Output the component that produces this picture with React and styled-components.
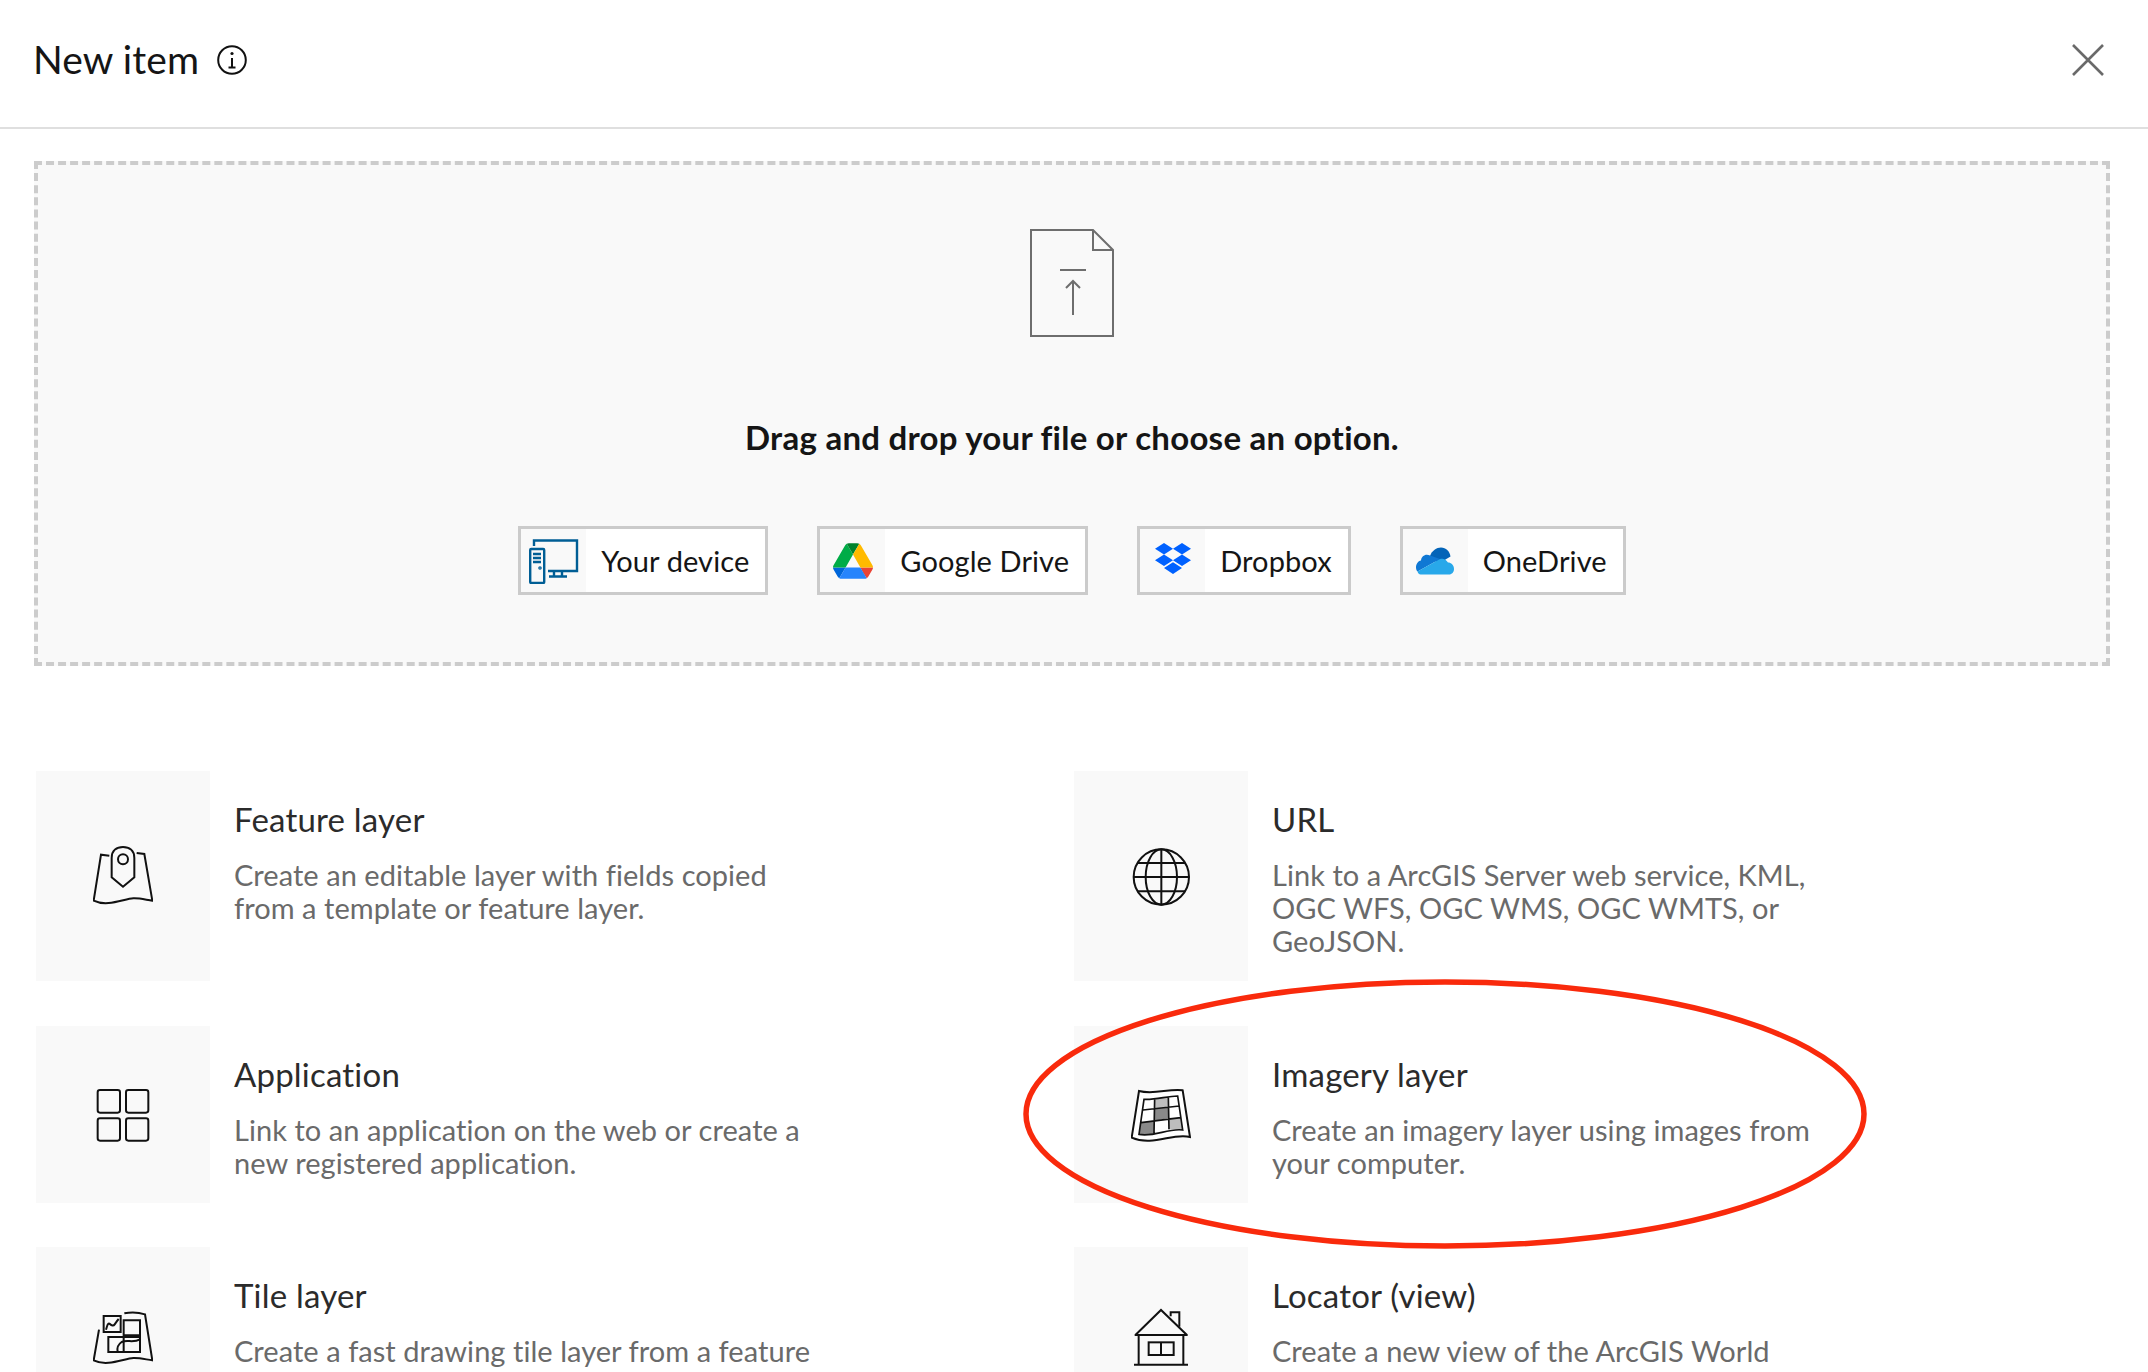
import React from "react";
import styled, { createGlobalStyle } from "styled-components";

const Global = createGlobalStyle`
  html, body { margin: 0; padding: 0; background: #fff; }
  body { width: 2148px; height: 1372px; overflow: hidden; font-family: Lato, "Noto Sans", sans-serif; }
`;

const Page = styled.div`
  position: relative;
  width: 2148px;
  height: 1372px;
  overflow: hidden;
  color: #151515;
`;
const Header = styled.header`
  box-sizing: border-box;
  height: 129px;
  padding: 0 33px 8px;
  display: flex;
  align-items: center;
  gap: 18px;
  border-bottom: 2px solid #dfdfdf;
`;
const Title = styled.h1`
  margin: 0;
  font-size: 39px;
  font-weight: 400;
  letter-spacing: 0.1px;
  line-height: 1;
`;
const CloseBtn = styled.button`
  margin-left: auto;
  margin-right: 11px;
  padding: 0;
  width: 32px;
  height: 32px;
  border: 0;
  background: none;
  display: flex;
`;
const Drop = styled.section`
  box-sizing: border-box;
  margin: 32px 38px 0 34px;
  height: 505px;
  border: 4px dashed #cccccc;
  background: #f9f9f9;
  display: flex;
  flex-direction: column;
  align-items: center;
  padding-top: 64px;
`;
const Prompt = styled.p`
  margin: 78px 0 0;
  font-size: 33px;
  font-weight: 700;
  line-height: 44px;
  letter-spacing: 0.25px;
  color: #151515;
`;
const Sources = styled.div`
  margin-top: 67px;
  display: flex;
  gap: 49px;
`;
const Source = styled.button`
  box-sizing: border-box;
  height: 69px;
  padding: 0 16px 1px 0;
  display: flex;
  align-items: center;
  border: 3px solid #cbcbcb;
  background: #fff;
  font: 400 29px Lato, sans-serif;
  letter-spacing: 0.1px;
  color: #151515;
`;
const SourceIcon = styled.span`
  width: 65px;
  align-self: stretch;
  margin: 0 15px -1px 0;
  background: #f9f9f9;
  display: flex;
  align-items: center;
  justify-content: center;
`;
const Grid = styled.div`
  margin: 105px 0 0 36px;
  display: grid;
  grid-template-columns: 1038px 1038px;
  row-gap: 44.5px;
`;
const Card = styled.article`
  display: flex;
  align-items: stretch;
  min-height: 177px;
`;
const Tile = styled.div`
  flex: none;
  width: 174px;
  background: #f9f9f9;
  display: flex;
  align-items: center;
  justify-content: center;
`;
const Body = styled.div`
  padding: 28px 0 24px 24px;
`;
const CardTitle = styled.h2`
  margin: 0 0 19px;
  font-size: 33px;
  font-weight: 400;
  line-height: 40px;
  letter-spacing: 0.2px;
  color: #2b2b2b;
`;
const CardText = styled.p`
  margin: 0;
  max-width: 585px;
  font-size: 29px;
  line-height: 33px;
  letter-spacing: 0.05px;
  color: #6a6a6a;
`;
const Mark = styled.svg`
  position: absolute;
  left: 1020px;
  top: 976px;
  pointer-events: none;
`;

const line = { fill: "none", stroke: "#111", strokeWidth: 6, strokeLinejoin: "miter" };

const Info = () => (
  <svg width="30" height="30" viewBox="0 0 30 30" fill="none" stroke="#111" strokeWidth="2">
    <circle cx="15" cy="15" r="13.8" />
    <path d="M15 13v9M11.5 22.5h7" />
    <circle cx="15" cy="8.5" r="1.6" fill="#111" stroke="none" />
  </svg>
);
const Close = () => (
  <svg width="32" height="32" viewBox="0 0 32 32" stroke="#6a6a6a" strokeWidth="2.6">
    <path d="M1 1l30 30M31 1L1 31" />
  </svg>
);
const FileUp = () => (
  <svg width="84" height="108" viewBox="0 0 84 108" fill="none" stroke="#6e6e6e" strokeWidth="2">
    <path d="M1 1h62l20 20v86H1z" />
    <path d="M63 1v20h20" />
    <path d="M30 41h26M43 86V52M36 59l7-7 7 7" />
  </svg>
);
const Device = () => (
  <svg width="50" height="46" viewBox="0 0 50 46" fill="none" stroke="#005e95" strokeWidth="2.4">
    <path d="M5 8V2.500h43V33H19" />
    <rect x="1.200" y="11" width="14" height="34" rx="1" />
    <path d="M4 16h8M4 20h8M4 24h8" />
    <path d="M25 33v5M33 33v5M20 38.500h18" />
    <circle cx="11" cy="30" r="0.6" fill="#005e95" />
  </svg>
);
const Drive = () => (
  <svg width="40" height="36" viewBox="0 0 87.3 78">
    <path d="M6.6 66.85l3.85 6.65c.8 1.4 1.95 2.5 3.3 3.3L27.5 53H0c0 1.55.4 3.1 1.2 4.5z" fill="#0066da" />
    <path d="M43.65 25L29.9 1.2c-1.35.8-2.5 1.9-3.3 3.3L1.2 48.5A9.06 9.06 0 0 0 0 53h27.5z" fill="#00ac47" />
    <path d="M73.55 76.8c1.35-.8 2.5-1.9 3.3-3.3l1.6-2.75L86.1 57.5c.8-1.4 1.2-2.95 1.2-4.5H59.8l5.85 11.5z" fill="#ea4335" />
    <path d="M43.65 25L57.4 1.2C56.05.4 54.5 0 52.9 0H34.4c-1.6 0-3.15.45-4.5 1.2z" fill="#00832d" />
    <path d="M59.8 53H27.5L13.75 76.8c1.35.8 2.9 1.2 4.5 1.2h50.8c1.6 0 3.15-.45 4.5-1.2z" fill="#2684fc" />
    <path d="M73.4 26.5L60.7 4.5c-.8-1.4-1.95-2.5-3.3-3.3L43.65 25 59.8 53h27.45c0-1.55-.4-3.1-1.2-4.5z" fill="#ffba00" />
  </svg>
);
const Dropbox = () => (
  <svg width="36" height="35" viewBox="0 0 36 35" fill="#0061ff">
    <path d="M9 0l9 5.7-9 5.8-9-5.8zM27 0l9 5.7-9 5.8-9-5.8zM0 17.3l9-5.8 9 5.8-9 5.7zM27 11.5l9 5.8-9 5.7-9-5.7zM9 25l9-5.7 9 5.7-9 6z" />
  </svg>
);
const OneDrive = () => (
  <svg width="38" height="28" viewBox="0 0 38 28">
    <path d="M14 9C16 3.500 20.500 .5 25 .5c5 0 8.500 3.500 9.500 9L22 17z" fill="#0364b8" />
    <path d="M14 8.500C9.500 6.500 5.500 9 5 13.500 2 14 0 17 0 20.500c0 1.500.5 3 1.500 4L24 12z" fill="#0f78d4" />
    <path d="M4.500 27.500H33c3 0 5-2.500 5-5.500 0-4-3-6.500-6-6.500-2-3.500-5-4.500-8-3.500L1.500 24.500c.5 2 1.800 3 3 3z" fill="#28a8ea" />
  </svg>
);
const Pictogram = ({ box, children }) => (
  <svg width="60" height="60" viewBox={`${box[0]} ${box[1]} 180 180`}>{children}</svg>
);
const PinMap = () => (
  <Pictogram box={[189, 256]}>
    <path {...line} d="M238 285l-25-3-22 138c40 20 90-5 119-7 20-1 40 5 57 7l-24-140-23-3" />
    <path {...line} d="M245 350v-58c0-24 16-33 34-33s34 9 34 33v58l-34 28z" />
    <circle {...line} cx="279" cy="296" r="15" />
  </Pictogram>
);
const Globe = () => (
  <Pictogram box={[185, 260]}>
    <g {...line}>
      <circle cx="276" cy="353" r="83" />
      <ellipse cx="276" cy="353" rx="47" ry="83" />
      <path d="M276 270v166M193 353h166M205 311h142M205 396h142" />
    </g>
  </Pictogram>
);
const Apps = () => (
  <Pictogram box={[189, 190]}>
    <g {...line}>
      <rect x="203" y="208" width="67" height="68" rx="7" />
      <rect x="288" y="208" width="67" height="68" rx="7" />
      <rect x="203" y="293" width="67" height="67" rx="7" />
      <rect x="288" y="293" width="67" height="67" rx="7" />
    </g>
  </Pictogram>
);
const Imagery = () => (
  <Pictogram box={[183, 194]}>
    <path fill="#fff" stroke="#111" strokeWidth="6" d="M207 215c45 12 90-8 131-2l22 140c-50-15-110 30-175 2z" />
    <path fill="#bdbdbd" d="M254 237l41-5 1 30-42 6z" />
    <path fill="#8a8a8a" d="M254 268l42-6 1 33-45 11z" />
    <path fill="#8a8a8a" d="M213 310l39-4v36c-15 4-32 5-45 3z" />
    <path fill="#bdbdbd" d="M297 295h35l6 37c-15-3-30-3-43-2z" />
    <path fill="none" stroke="#111" strokeWidth="5" d="M222 240c35 2 70-10 101-10l15 102c-45-6-85 22-131 13zM219 272l109-12M213 310l119-15M254 237l-2 105M295 232l2 98" />
  </Pictogram>
);
const TileMap = () => (
  <Pictogram box={[189, 197]}>
    <g {...line}>
      <path d="M207 268l-16 92c40 20 90-5 119-7 20-1 40 5 57 7l-22-138c-20-6-45-6-62-3" />
      <rect x="221" y="227" width="51" height="48" />
      <path d="M228 268c4-14 6-20 10-18 8 6 12 8 16 2 4-6 8-12 12-16" />
      <path d="M281 285v-45h49v45zM235 290h95v45h-95zM281 290v45" />
      <path d="M263 335c-3-14 0-22 12-30 16-8 35 4 55-8" />
    </g>
  </Pictogram>
);
const House = () => (
  <Pictogram box={[186, 196]}>
    <g {...line}>
      <path d="M200 282l76-74 77 74M197 283h159" />
      <path d="M305 227v-12h26v43" />
      <path d="M209 282v90M343 282v90M195 372h162" />
      <rect x="239" y="305" width="75" height="38" />
      <path d="M276 305v38" />
    </g>
  </Pictogram>
);

const sources = [
  ["Your device", Device],
  ["Google Drive", Drive],
  ["Dropbox", Dropbox],
  ["OneDrive", OneDrive],
];
const items = [
  ["Feature layer", "Create an editable layer with fields copied from a template or feature layer.", PinMap],
  ["URL", "Link to a ArcGIS Server web service, KML, OGC WFS, OGC WMS, OGC WMTS, or GeoJSON.", Globe],
  ["Application", "Link to an application on the web or create a new registered application.", Apps],
  ["Imagery layer", "Create an imagery layer using images from your computer.", Imagery],
  ["Tile layer", "Create a fast drawing tile layer from a feature", TileMap],
  ["Locator (view)", "Create a new view of the ArcGIS World", House],
];

export default function App() {
  return (
    <Page>
      <Global />
      <Header>
        <Title>New item</Title>
        <Info />
        <CloseBtn aria-label="Close"><Close /></CloseBtn>
      </Header>
      <Drop>
        <FileUp />
        <Prompt>Drag and drop your file or choose an option.</Prompt>
        <Sources>
          {sources.map(([label, Icon]) => (
            <Source key={label}>
              <SourceIcon><Icon /></SourceIcon>
              {label}
            </Source>
          ))}
        </Sources>
      </Drop>
      <Grid>
        {items.map(([title, text, Icon]) => (
          <Card key={title}>
            <Tile><Icon /></Tile>
            <Body>
              <CardTitle>{title}</CardTitle>
              <CardText>{text}</CardText>
            </Body>
          </Card>
        ))}
      </Grid>
      <Mark width="850" height="280" viewBox="1020 976 850 280">
        <ellipse cx="1445" cy="1114" rx="419" ry="132" fill="none" stroke="#f92a0c" strokeWidth="5.5" />
      </Mark>
    </Page>
  );
}
